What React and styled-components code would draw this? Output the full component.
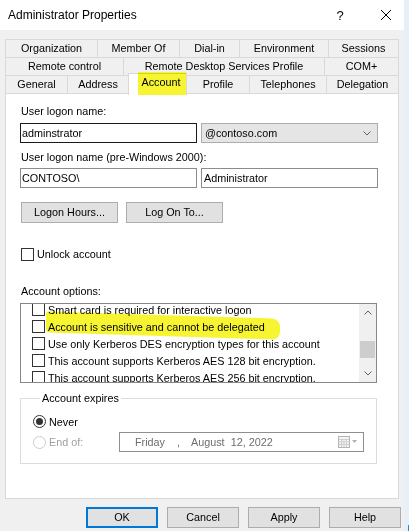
import React from "react";
import styled, { createGlobalStyle } from "styled-components";

const FS = "10.8px";

const Global = createGlobalStyle`
  html, body { margin: 0; padding: 0; }
  body {
    width: 409px; height: 531px; overflow: hidden;
    background: #e7eff9;
    font-family: "Liberation Sans", Arial, sans-serif;
    color: #000;
  }
  * { box-sizing: border-box; }
`;

const Screen = styled.div`
  display: flex;
  width: 409px;
  height: 531px;
`;

const Window = styled.div`
  width: 404px;
  display: flex;
  flex-direction: column;
  background: #f0f0f0;
`;

const Edge = styled.div`
  flex: 1;
  background: #e7eff9;
  position: relative;
  &::after {
    content: "";
    position: absolute;
    right: 0;
    bottom: 0;
    width: 1px;
    height: 6px;
    background: #2f86d6;
  }
`;

const TitleBar = styled.div`
  height: 30px;
  background: #fff;
  display: flex;
  align-items: center;
  padding-left: 8px;
  font-size: 12px;
`;

const TitleText = styled.div`
  flex: 1;
`;

const TitleHelp = styled.div`
  width: 20px;
  margin-right: 18px;
  text-align: center;
  font-size: 13px;
`;

const TitleClose = styled.div`
  width: 36px;
  height: 30px;
  display: flex;
  align-items: center;
  justify-content: center;
`;

const Tabs = styled.div`
  margin-top: 9px;
  padding-left: 5px;
  display: flex;
  flex-direction: column;
`;

const TabRow = styled.div`
  display: flex;
  height: 19px;
  margin-top: ${(p) => (p.$first ? 0 : -1)}px;
  align-items: flex-start;
`;

const Tab = styled.div`
  width: ${(p) => p.$w}px;
  height: 19px;
  border: 1px solid #d9d9d9;
  margin-left: -1px;
  &:first-child { margin-left: 0; }
  background: #f0f0f0;
  font-size: ${FS};
  line-height: 17px;
  text-align: center;
  white-space: nowrap;
`;

const ActiveTab = styled.div`
  width: ${(p) => p.$w}px;
  height: 22px;
  margin-top: -2px;
  margin-left: -1px;
  border: 1px solid #d9d9d9;
  border-bottom: none;
  background: #fff;
  position: relative;
  z-index: 1;
  font-size: ${FS};
  line-height: 17px;
  padding-left: 7px;
  text-align: center;
  white-space: nowrap;
`;

const TabMarker = styled.span`
  position: absolute;
  top: -2px;
  bottom: 0;
  left: 9px;
  right: 0;
  background: #f7f531;
  mix-blend-mode: multiply;
`;

const Panel = styled.div`
  margin-top: -1px;
  margin-left: 5px;
  width: 394px;
  height: 406px;
  border: 1px solid #d9d9d9;
  background: #fff;
  padding: 0 0 0 14px;
  display: flex;
  flex-direction: column;
`;

const Label = styled.div`
  margin-top: ${(p) => p.$mt}px;
  margin-left: 1px;
  font-size: ${FS};
  line-height: 13px;
  height: 13px;
`;

const FieldRow = styled.div`
  display: flex;
  gap: 4px;
  margin-top: ${(p) => p.$mt}px;
`;

const TextBox = styled.div`
  width: 177px;
  height: 20px;
  border: 1px solid ${(p) => (p.$focus ? "#1a1a1a" : "#8c8c8c")};
  background: #fff;
  font-size: ${FS};
  line-height: 18px;
  padding-left: ${(p) => p.$pl || 1}px;
  white-space: nowrap;
`;

const Combo = styled.div`
  width: 177px;
  height: 20px;
  border: 1px solid #adadad;
  background: #e5e5e5;
  font-size: ${FS};
  line-height: 18px;
  padding: 0 6px 0 3px;
  display: flex;
  align-items: center;
  justify-content: space-between;
`;

const ButtonRow = styled.div`
  display: flex;
  gap: 8px;
  margin-top: ${(p) => p.$mt}px;
  margin-left: 1px;
`;

const Button = styled.div`
  width: ${(p) => p.$w}px;
  height: 21px;
  border: 1px solid ${(p) => (p.$default ? "#0078d7" : "#adadad")};
  box-shadow: ${(p) => (p.$default ? "inset 0 0 0 1px #0078d7" : "none")};
  background: #e1e1e1;
  font-size: ${FS};
  line-height: 19px;
  text-align: center;
  white-space: nowrap;
`;

const CheckRow = styled.div`
  display: flex;
  align-items: center;
  gap: 3px;
  height: 13px;
  margin-top: ${(p) => p.$mt}px;
  margin-left: 1px;
  font-size: ${FS};
  line-height: 13px;
`;

const Box = styled.span`
  width: 13px;
  height: 13px;
  border: 1px solid #333;
  background: #fff;
  flex: none;
`;

const ListBox = styled.div`
  margin-top: 5px;
  width: 357px;
  height: 80px;
  border: 1px solid #828790;
  background: #fff;
  display: flex;
  overflow: hidden;
`;

const ListItems = styled.div`
  flex: 1;
  margin-top: -3px;
  display: flex;
  flex-direction: column;
`;

const ListItem = styled.div`
  height: 17px;
  flex: none;
  display: flex;
  align-items: center;
  gap: 3px;
  padding-left: 11px;
  font-size: ${FS};
  white-space: nowrap;
  position: relative;
`;

const Highlight = styled.span`
  position: absolute;
  left: 25px;
  width: 234px;
  top: -3px;
  height: 21px;
  background: #f7f531;
  border-radius: 3px 8px 8px 3px;
  transform: skewY(1.8deg);
  mix-blend-mode: multiply;
`;

const ScrollBar = styled.div`
  width: 17px;
  flex: none;
  background: #f0f0f0;
  display: flex;
  flex-direction: column;
`;

const ScrollArrow = styled.div`
  height: 17px;
  flex: none;
  display: flex;
  align-items: center;
  justify-content: center;
`;

const ScrollTrack = styled.div`
  flex: 1;
  padding: 20px 1px 0 1px;
`;

const Thumb = styled.div`
  height: 17px;
  background: #cdcdcd;
`;

const Group = styled.fieldset`
  margin: 9px 0 0 0;
  width: 357px;
  min-width: 0;
  border: 1px solid #dcdcdc;
  padding: 10px 0 11px 12px;
  display: flex;
  flex-direction: column;
`;

const Legend = styled.legend`
  font-size: ${FS};
  line-height: 13px;
  padding: 0 2px;
  margin-left: 7px;
`;

const RadioRow = styled.div`
  display: flex;
  align-items: center;
  height: ${(p) => p.$h}px;
  margin-top: ${(p) => p.$mt || 0}px;
  font-size: ${FS};
`;

const Radio = styled.span`
  width: 13px;
  height: 13px;
  border-radius: 50%;
  border: 1px solid ${(p) => (p.$disabled ? "#cccccc" : "#333")};
  background: #fff;
  display: flex;
  align-items: center;
  justify-content: center;
  flex: none;
  &::after {
    content: "";
    width: 7px;
    height: 7px;
    border-radius: 50%;
    background: ${(p) => (p.$checked ? "#333" : "transparent")};
  }
`;

const RadioText = styled.span`
  margin-left: 3px;
  width: ${(p) => p.$w || "auto"};
  color: ${(p) => (p.$disabled ? "#a0a0a0" : "#000")};
`;

const DateBox = styled.div`
  width: 245px;
  height: 20px;
  border: 1px solid #8f8f8f;
  background: #fff;
  display: flex;
  align-items: center;
  padding-left: 15px;
  color: #6d6d6d;
  font-size: ${FS};
  white-space: nowrap;
`;

const DatePart = styled.span`
  margin-left: ${(p) => p.$ml || 0}px;
`;

const DateIcon = styled.span`
  margin-left: auto;
  margin-right: 5px;
  display: flex;
  align-items: center;
`;

const Footer = styled.div`
  display: flex;
  justify-content: flex-end;
  gap: 9px;
  margin-top: 8px;
  padding-right: 3px;
`;

const CloseIcon = () => (
  <svg width="12" height="12" viewBox="0 0 12 12">
    <path d="M1 1 L11 11 M11 1 L1 11" stroke="#000" strokeWidth="1" fill="none" />
  </svg>
);

const Chevron = ({ up, color = "#606060", w = 8, h = 5 }) => (
  <svg width={w} height={h} viewBox="0 0 8 5">
    <polyline
      points={up ? "0.5,4.5 4,1 7.5,4.5" : "0.5,0.5 4,4 7.5,0.5"}
      stroke={color}
      strokeWidth="1"
      fill="none"
    />
  </svg>
);

const CalendarIcon = () => (
  <svg width="20" height="12" viewBox="0 0 20 12">
    <rect x="0.5" y="0.5" width="11" height="11" fill="#f4f4f4" stroke="#b5b5b5" />
    <path d="M1 3.5 H11 M1 6 H11 M1 8.5 H11 M3.5 3 V11 M6 3 V11 M8.5 3 V11" stroke="#cfcfcf" strokeWidth="1" />
    <polygon points="14,4 19,4 16.5,7" fill="#b0b0b0" />
  </svg>
);

const row1 = [
  ["Organization", 93],
  ["Member Of", 83],
  ["Dial-in", 61],
  ["Environment", 90],
  ["Sessions", 71],
];
const row2 = [
  ["Remote control", 119],
  ["Remote Desktop Services Profile", 202],
  ["COM+", 75],
];
const row3 = [
  ["General", 63],
  ["Address", 62],
  ["Account", 59, true],
  ["Profile", 64],
  ["Telephones", 78],
  ["Delegation", 73],
];

const options = [
  "Smart card is required for interactive logon",
  "Account is sensitive and cannot be delegated",
  "Use only Kerberos DES encryption types for this account",
  "This account supports Kerberos AES 128 bit encryption.",
  "This account supports Kerberos AES 256 bit encryption.",
];

export default function App() {
  return (
    <>
      <Global />
      <Screen>
        <Window>
          <TitleBar>
            <TitleText>Administrator Properties</TitleText>
            <TitleHelp>?</TitleHelp>
            <TitleClose>
              <CloseIcon />
            </TitleClose>
          </TitleBar>

          <Tabs>
            <TabRow $first>
              {row1.map(([t, w]) => (
                <Tab key={t} $w={w}>{t}</Tab>
              ))}
            </TabRow>
            <TabRow>
              {row2.map(([t, w]) => (
                <Tab key={t} $w={w}>{t}</Tab>
              ))}
            </TabRow>
            <TabRow>
              {row3.map(([t, w, active]) =>
                active ? (
                  <ActiveTab key={t} $w={w}>
                    <TabMarker />
                    {t}
                  </ActiveTab>
                ) : (
                  <Tab key={t} $w={w}>{t}</Tab>
                )
              )}
            </TabRow>
          </Tabs>

          <Panel>
            <Label $mt={11}>User logon name:</Label>
            <FieldRow $mt={5}>
              <TextBox $focus>adminstrator</TextBox>
              <Combo>
                <span>@contoso.com</span>
                <Chevron />
              </Combo>
            </FieldRow>
            <Label $mt={8}>User logon name (pre-Windows 2000):</Label>
            <FieldRow $mt={4}>
              <TextBox>CONTOSO\</TextBox>
              <TextBox $pl={2}>Administrator</TextBox>
            </FieldRow>
            <ButtonRow $mt={14}>
              <Button $w={97}>Logon Hours...</Button>
              <Button $w={97}>Log On To...</Button>
            </ButtonRow>
            <CheckRow $mt={25}>
              <Box />
              <span>Unlock account</span>
            </CheckRow>
            <Label $mt={24}>Account options:</Label>
            <ListBox>
              <ListItems>
                {options.map((o, i) => (
                  <ListItem key={o}>
                    {i === 1 && <Highlight />}
                    <Box />
                    <span>{o}</span>
                  </ListItem>
                ))}
              </ListItems>
              <ScrollBar>
                <ScrollArrow>
                  <Chevron up />
                </ScrollArrow>
                <ScrollTrack>
                  <Thumb />
                </ScrollTrack>
                <ScrollArrow>
                  <Chevron />
                </ScrollArrow>
              </ScrollBar>
            </ListBox>
            <Group>
              <Legend>Account expires</Legend>
              <RadioRow $h={13}>
                <Radio $checked />
                <RadioText>Never</RadioText>
              </RadioRow>
              <RadioRow $h={20} $mt={4}>
                <Radio $disabled />
                <RadioText $disabled $w="70px">End of:</RadioText>
                <DateBox>
                  <DatePart>Friday</DatePart>
                  <DatePart $ml={12}>,</DatePart>
                  <DatePart $ml={11}>August</DatePart>
                  <DatePart $ml={6}>12, 2022</DatePart>
                  <DateIcon>
                    <CalendarIcon />
                  </DateIcon>
                </DateBox>
              </RadioRow>
            </Group>
          </Panel>

          <Footer>
            <Button $w={72} $default>OK</Button>
            <Button $w={72}>Cancel</Button>
            <Button $w={72}>Apply</Button>
            <Button $w={72}>Help</Button>
          </Footer>
        </Window>
        <Edge />
      </Screen>
    </>
  );
}
